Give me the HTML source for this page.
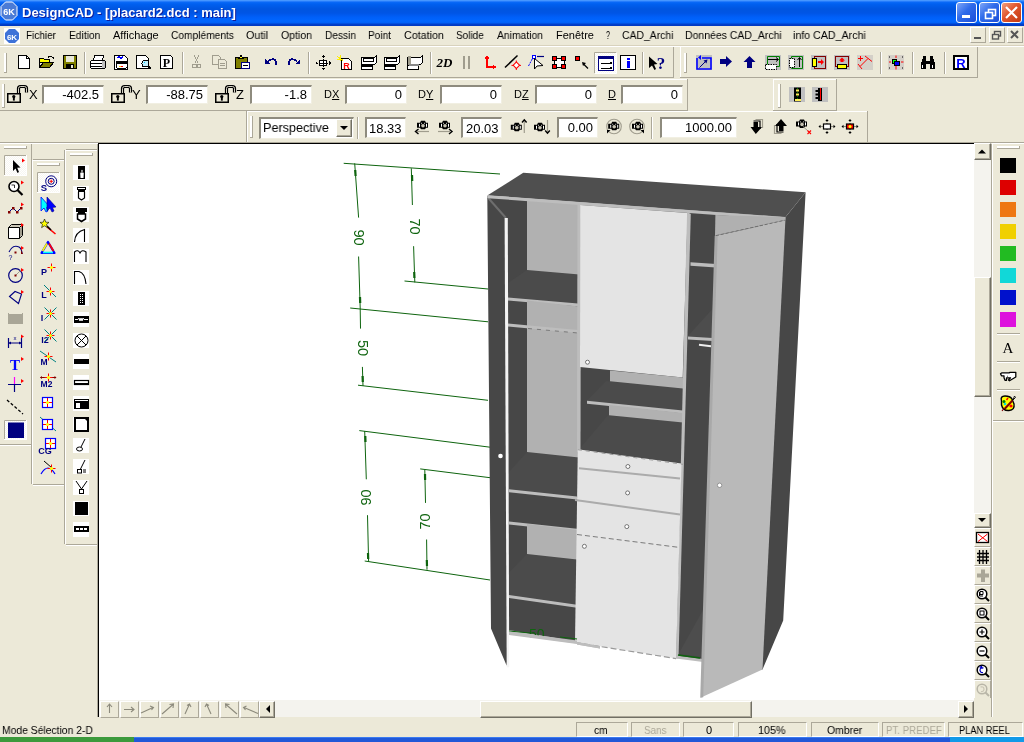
<!DOCTYPE html>
<html><head><meta charset="utf-8">
<style>
*{margin:0;padding:0;box-sizing:border-box}
html,body{-webkit-font-smoothing:antialiased;width:1024px;height:742px;overflow:hidden;background:#ECE9D8;font-family:"Liberation Sans",sans-serif;font-size:11px;color:#000}
.a{position:absolute}
#title{left:0;top:0;width:1024px;height:26px;background:linear-gradient(#4FA0FF 0,#3D8CFF 1px,#0A6AF8 2px,#0060F0 4px,#0055E0 9px,#0055E5 13px,#005FF8 17px,#0066FF 21px,#0060F5 23px,#0040CC 24px,#0038C0 26px)}
svg{position:absolute;left:0;top:0;will-change:transform}
u{text-decoration:underline}
</style></head><body>
<div class="a" id="title"></div>
<div class="a" style="left:22px;top:6px;font-size:13px;line-height:1;white-space:pre;will-change:transform;color:#fff;font-weight:bold;text-shadow:1px 1px 0 #0F1D9A">DesignCAD - [placard2.dcd : main]</div>
<div class="a" style="left:956px;top:2px;width:21px;height:21px;border:1px solid #fff;border-radius:3px;background:linear-gradient(135deg,#7FA6F8,#2F6BEA 45%,#1B4ED8)"></div>
<div class="a" style="left:979px;top:2px;width:21px;height:21px;border:1px solid #fff;border-radius:3px;background:linear-gradient(135deg,#7FA6F8,#2F6BEA 45%,#1B4ED8)"></div>
<div class="a" style="left:1001px;top:2px;width:21px;height:21px;border:1px solid #fff;border-radius:3px;background:linear-gradient(135deg,#F0A080,#E0552C 45%,#C23A12)"></div>
<div class="a" style="left:962px;top:15px;width:8px;height:3px;background:#fff"></div>
<div class="a" style="left:26px;top:30px;font-size:11px;line-height:1;white-space:pre;will-change:transform;transform:scaleX(0.909);transform-origin:0 0;">Fichier</div>
<div class="a" style="left:68.5px;top:30px;font-size:11px;line-height:1;white-space:pre;will-change:transform;transform:scaleX(0.929);transform-origin:0 0;">Edition</div>
<div class="a" style="left:112.5px;top:30px;font-size:11px;line-height:1;white-space:pre;will-change:transform;transform:scaleX(0.996);transform-origin:0 0;">Affichage</div>
<div class="a" style="left:171px;top:30px;font-size:11px;line-height:1;white-space:pre;will-change:transform;transform:scaleX(0.928);transform-origin:0 0;">Compléments</div>
<div class="a" style="left:246px;top:30px;font-size:11px;line-height:1;white-space:pre;will-change:transform;transform:scaleX(0.972);transform-origin:0 0;">Outil</div>
<div class="a" style="left:281px;top:30px;font-size:11px;line-height:1;white-space:pre;will-change:transform;transform:scaleX(0.956);transform-origin:0 0;">Option</div>
<div class="a" style="left:324.5px;top:30px;font-size:11px;line-height:1;white-space:pre;will-change:transform;transform:scaleX(0.922);transform-origin:0 0;">Dessin</div>
<div class="a" style="left:367.5px;top:30px;font-size:11px;line-height:1;white-space:pre;will-change:transform;transform:scaleX(0.917);transform-origin:0 0;">Point</div>
<div class="a" style="left:403.75px;top:30px;font-size:11px;line-height:1;white-space:pre;will-change:transform;transform:scaleX(0.976);transform-origin:0 0;">Cotation</div>
<div class="a" style="left:456px;top:30px;font-size:11px;line-height:1;white-space:pre;will-change:transform;transform:scaleX(0.908);transform-origin:0 0;">Solide</div>
<div class="a" style="left:497px;top:30px;font-size:11px;line-height:1;white-space:pre;will-change:transform;transform:scaleX(0.94);transform-origin:0 0;">Animation</div>
<div class="a" style="left:555.5px;top:30px;font-size:11px;line-height:1;white-space:pre;will-change:transform;transform:scaleX(0.989);transform-origin:0 0;">Fenêtre</div>
<div class="a" style="left:606px;top:30px;font-size:11px;line-height:1;white-space:pre;will-change:transform;transform:scaleX(0.653);transform-origin:0 0;">?</div>
<div class="a" style="left:622px;top:30px;font-size:11px;line-height:1;white-space:pre;will-change:transform;transform:scaleX(0.947);transform-origin:0 0;">CAD_Archi</div>
<div class="a" style="left:684.75px;top:30px;font-size:11px;line-height:1;white-space:pre;will-change:transform;transform:scaleX(0.953);transform-origin:0 0;">Données CAD_Archi</div>
<div class="a" style="left:793px;top:30px;font-size:11px;line-height:1;white-space:pre;will-change:transform;transform:scaleX(0.967);transform-origin:0 0;">info CAD_Archi</div>
<div class="a" style="left:970px;top:27px;width:16px;height:16px;border:1px solid;border-color:#fff #ACA899 #ACA899 #fff;background:#ECE9D8"></div>
<div class="a" style="left:989px;top:27px;width:16px;height:16px;border:1px solid;border-color:#fff #ACA899 #ACA899 #fff;background:#ECE9D8"></div>
<div class="a" style="left:1007px;top:27px;width:16px;height:16px;border:1px solid;border-color:#fff #ACA899 #ACA899 #fff;background:#ECE9D8"></div>
<div class="a" style="left:974px;top:37px;width:7px;height:2px;background:#555"></div>
<div class="a" style="left:0px;top:45px;width:1024px;height:1px;background:#D8D2BD"></div>
<div class="a" style="left:0px;top:46px;width:1024px;height:1px;background:#fff"></div>
<div class="a" style="left:0px;top:77px;width:674px;height:1px;background:#ACA899"></div>
<div class="a" style="left:680px;top:77px;width:298px;height:1px;background:#ACA899"></div>
<div class="a" style="left:673px;top:47px;width:1px;height:31px;background:#ACA899"></div>
<div class="a" style="left:680px;top:47px;width:1px;height:30px;background:#fff"></div>
<div class="a" style="left:977px;top:47px;width:1px;height:31px;background:#ACA899"></div>
<div class="a" style="left:4px;top:53px;width:1px;height:20px;background:#fff"></div>
<div class="a" style="left:5px;top:53px;width:1px;height:20px;background:#fff"></div>
<div class="a" style="left:6px;top:53px;width:1px;height:20px;background:#ACA899"></div>
<div class="a" style="left:4px;top:72px;width:3px;height:1px;background:#ACA899"></div>
<div class="a" style="left:684px;top:53px;width:1px;height:20px;background:#fff"></div>
<div class="a" style="left:685px;top:53px;width:1px;height:20px;background:#fff"></div>
<div class="a" style="left:686px;top:53px;width:1px;height:20px;background:#ACA899"></div>
<div class="a" style="left:684px;top:72px;width:3px;height:1px;background:#ACA899"></div>
<div class="a" style="left:84px;top:52px;width:1px;height:22px;background:#ACA899"></div>
<div class="a" style="left:85px;top:52px;width:1px;height:22px;background:#fff"></div>
<div class="a" style="left:182px;top:52px;width:1px;height:22px;background:#ACA899"></div>
<div class="a" style="left:183px;top:52px;width:1px;height:22px;background:#fff"></div>
<div class="a" style="left:308px;top:52px;width:1px;height:22px;background:#ACA899"></div>
<div class="a" style="left:309px;top:52px;width:1px;height:22px;background:#fff"></div>
<div class="a" style="left:430px;top:52px;width:1px;height:22px;background:#ACA899"></div>
<div class="a" style="left:431px;top:52px;width:1px;height:22px;background:#fff"></div>
<div class="a" style="left:642px;top:52px;width:1px;height:22px;background:#ACA899"></div>
<div class="a" style="left:643px;top:52px;width:1px;height:22px;background:#fff"></div>
<div class="a" style="left:880px;top:52px;width:1px;height:22px;background:#ACA899"></div>
<div class="a" style="left:881px;top:52px;width:1px;height:22px;background:#fff"></div>
<div class="a" style="left:912px;top:52px;width:1px;height:22px;background:#ACA899"></div>
<div class="a" style="left:913px;top:52px;width:1px;height:22px;background:#fff"></div>
<div class="a" style="left:944px;top:52px;width:1px;height:22px;background:#ACA899"></div>
<div class="a" style="left:945px;top:52px;width:1px;height:22px;background:#fff"></div>
<div class="a" style="left:0px;top:79px;width:688px;height:1px;background:#fff"></div>
<div class="a" style="left:773px;top:79px;width:64px;height:1px;background:#fff"></div>
<div class="a" style="left:0px;top:110px;width:688px;height:1px;background:#ACA899"></div>
<div class="a" style="left:773px;top:110px;width:64px;height:1px;background:#ACA899"></div>
<div class="a" style="left:687px;top:79px;width:1px;height:32px;background:#ACA899"></div>
<div class="a" style="left:773px;top:79px;width:1px;height:31px;background:#fff"></div>
<div class="a" style="left:836px;top:79px;width:1px;height:32px;background:#ACA899"></div>
<div class="a" style="left:2px;top:84px;width:1px;height:24px;background:#fff"></div>
<div class="a" style="left:3px;top:84px;width:1px;height:24px;background:#fff"></div>
<div class="a" style="left:4px;top:84px;width:1px;height:24px;background:#ACA899"></div>
<div class="a" style="left:2px;top:107px;width:3px;height:1px;background:#ACA899"></div>
<div class="a" style="left:778px;top:84px;width:1px;height:24px;background:#fff"></div>
<div class="a" style="left:779px;top:84px;width:1px;height:24px;background:#fff"></div>
<div class="a" style="left:780px;top:84px;width:1px;height:24px;background:#ACA899"></div>
<div class="a" style="left:778px;top:107px;width:3px;height:1px;background:#ACA899"></div>
<div class="a" style="left:42px;top:85px;width:62px;height:19px;background:#fff;border-top:2px solid #8E8B7E;border-left:2px solid #8E8B7E;border-right:1px solid #F1EFE2;border-bottom:1px solid #F1EFE2"></div>
<div class="a" style="left:42px;top:85px;width:57px;height:19px;font-size:13px;line-height:20px;text-align:right;white-space:pre;will-change:transform">-402.5</div>
<div class="a" style="left:146px;top:85px;width:62px;height:19px;background:#fff;border-top:2px solid #8E8B7E;border-left:2px solid #8E8B7E;border-right:1px solid #F1EFE2;border-bottom:1px solid #F1EFE2"></div>
<div class="a" style="left:146px;top:85px;width:57px;height:19px;font-size:13px;line-height:20px;text-align:right;white-space:pre;will-change:transform">-88.75</div>
<div class="a" style="left:250px;top:85px;width:62px;height:19px;background:#fff;border-top:2px solid #8E8B7E;border-left:2px solid #8E8B7E;border-right:1px solid #F1EFE2;border-bottom:1px solid #F1EFE2"></div>
<div class="a" style="left:250px;top:85px;width:57px;height:19px;font-size:13px;line-height:20px;text-align:right;white-space:pre;will-change:transform">-1.8</div>
<div class="a" style="left:345px;top:85px;width:62px;height:19px;background:#fff;border-top:2px solid #8E8B7E;border-left:2px solid #8E8B7E;border-right:1px solid #F1EFE2;border-bottom:1px solid #F1EFE2"></div>
<div class="a" style="left:345px;top:85px;width:57px;height:19px;font-size:13px;line-height:20px;text-align:right;white-space:pre;will-change:transform">0</div>
<div class="a" style="left:440px;top:85px;width:62px;height:19px;background:#fff;border-top:2px solid #8E8B7E;border-left:2px solid #8E8B7E;border-right:1px solid #F1EFE2;border-bottom:1px solid #F1EFE2"></div>
<div class="a" style="left:440px;top:85px;width:57px;height:19px;font-size:13px;line-height:20px;text-align:right;white-space:pre;will-change:transform">0</div>
<div class="a" style="left:535px;top:85px;width:62px;height:19px;background:#fff;border-top:2px solid #8E8B7E;border-left:2px solid #8E8B7E;border-right:1px solid #F1EFE2;border-bottom:1px solid #F1EFE2"></div>
<div class="a" style="left:535px;top:85px;width:57px;height:19px;font-size:13px;line-height:20px;text-align:right;white-space:pre;will-change:transform">0</div>
<div class="a" style="left:621px;top:85px;width:62px;height:19px;background:#fff;border-top:2px solid #8E8B7E;border-left:2px solid #8E8B7E;border-right:1px solid #F1EFE2;border-bottom:1px solid #F1EFE2"></div>
<div class="a" style="left:621px;top:85px;width:57px;height:19px;font-size:13px;line-height:20px;text-align:right;white-space:pre;will-change:transform">0</div>
<div class="a" style="left:29px;top:88px;font-size:13px;line-height:1;white-space:pre;will-change:transform;transform:scaleX(0.95);transform-origin:0 0;">X</div>
<div class="a" style="left:132px;top:88px;font-size:13px;line-height:1;white-space:pre;will-change:transform;transform:scaleX(0.95);transform-origin:0 0;">Y</div>
<div class="a" style="left:236px;top:88px;font-size:13px;line-height:1;white-space:pre;will-change:transform;transform:scaleX(0.95);transform-origin:0 0;">Z</div>
<div class="a" style="left:324px;top:89px;font-size:11px;line-height:1;white-space:pre;will-change:transform;">D<u>X</u></div>
<div class="a" style="left:418px;top:89px;font-size:11px;line-height:1;white-space:pre;will-change:transform;">D<u>Y</u></div>
<div class="a" style="left:514px;top:89px;font-size:11px;line-height:1;white-space:pre;will-change:transform;">D<u>Z</u></div>
<div class="a" style="left:607.5px;top:89px;font-size:11px;line-height:1;white-space:pre;will-change:transform;"><u>D</u></div>
<div class="a" style="left:247px;top:111px;width:620px;height:1px;background:#fff"></div>
<div class="a" style="left:246px;top:111px;width:1px;height:32px;background:#ACA899"></div>
<div class="a" style="left:247px;top:111px;width:1px;height:32px;background:#fff"></div>
<div class="a" style="left:867px;top:111px;width:1px;height:32px;background:#ACA899"></div>
<div class="a" style="left:250px;top:116px;width:1px;height:22px;background:#fff"></div>
<div class="a" style="left:251px;top:116px;width:1px;height:22px;background:#fff"></div>
<div class="a" style="left:252px;top:116px;width:1px;height:22px;background:#ACA899"></div>
<div class="a" style="left:250px;top:137px;width:3px;height:1px;background:#ACA899"></div>
<div class="a" style="left:259px;top:117px;width:95px;height:22px;background:#fff;border-top:2px solid #8E8B7E;border-left:2px solid #8E8B7E;border-right:1px solid #F1EFE2;border-bottom:1px solid #F1EFE2"></div>
<div class="a" style="left:263px;top:121px;font-size:13px;line-height:1;white-space:pre;will-change:transform;transform:scaleX(0.97);transform-origin:0 0;">Perspective</div>
<div class="a" style="left:336px;top:119px;width:16px;height:18px;background:#ECE9D8;border:1px solid;border-color:#fff #716F64 #716F64 #fff;box-shadow:inset -1px -1px 0 #ACA899"></div>
<div class="a" style="left:357px;top:117px;width:1px;height:22px;background:#ACA899"></div>
<div class="a" style="left:358px;top:117px;width:1px;height:22px;background:#fff"></div>
<div class="a" style="left:365px;top:117px;width:41px;height:21px;background:#fff;border-top:2px solid #8E8B7E;border-left:2px solid #8E8B7E;border-right:1px solid #F1EFE2;border-bottom:1px solid #F1EFE2"></div>
<div class="a" style="left:365px;top:117px;width:36px;height:21px;font-size:13px;line-height:22px;text-align:right;white-space:pre;will-change:transform"></div>
<div class="a" style="left:461px;top:117px;width:41px;height:21px;background:#fff;border-top:2px solid #8E8B7E;border-left:2px solid #8E8B7E;border-right:1px solid #F1EFE2;border-bottom:1px solid #F1EFE2"></div>
<div class="a" style="left:461px;top:117px;width:36px;height:21px;font-size:13px;line-height:22px;text-align:right;white-space:pre;will-change:transform"></div>
<div class="a" style="left:369px;top:119px;width:35px;height:18px;overflow:hidden;font-size:13px;line-height:19px;white-space:pre;will-change:transform">18.33</div>
<div class="a" style="left:466px;top:119px;width:34px;height:18px;overflow:hidden;font-size:13px;line-height:19px;white-space:pre;will-change:transform">20.03</div>
<div class="a" style="left:557px;top:117px;width:41px;height:21px;background:#fff;border-top:2px solid #8E8B7E;border-left:2px solid #8E8B7E;border-right:1px solid #F1EFE2;border-bottom:1px solid #F1EFE2"></div>
<div class="a" style="left:557px;top:117px;width:36px;height:21px;font-size:13px;line-height:22px;text-align:right;white-space:pre;will-change:transform">0.00</div>
<div class="a" style="left:660px;top:117px;width:77px;height:21px;background:#fff;border-top:2px solid #8E8B7E;border-left:2px solid #8E8B7E;border-right:1px solid #F1EFE2;border-bottom:1px solid #F1EFE2"></div>
<div class="a" style="left:660px;top:117px;width:72px;height:21px;font-size:13px;line-height:22px;text-align:right;white-space:pre;will-change:transform">1000.00</div>
<div class="a" style="left:651px;top:117px;width:1px;height:22px;background:#ACA899"></div>
<div class="a" style="left:652px;top:117px;width:1px;height:22px;background:#fff"></div>
<div class="a" style="left:0px;top:142px;width:98px;height:1px;background:#ACA899"></div>
<div class="a" style="left:0px;top:143px;width:98px;height:1px;background:#fff"></div>
<div class="a" style="left:98px;top:142px;width:894px;height:1px;background:#ACA899"></div>
<div class="a" style="left:31px;top:144px;width:1px;height:340px;background:#ACA899"></div>
<div class="a" style="left:32px;top:160px;width:1px;height:324px;background:#fff"></div>
<div class="a" style="left:0px;top:444px;width:31px;height:1px;background:#ACA899"></div>
<div class="a" style="left:0px;top:445px;width:31px;height:1px;background:#fff"></div>
<div class="a" style="left:33px;top:159px;width:31px;height:1px;background:#ACA899"></div>
<div class="a" style="left:33px;top:160px;width:31px;height:1px;background:#fff"></div>
<div class="a" style="left:64px;top:150px;width:1px;height:394px;background:#ACA899"></div>
<div class="a" style="left:65px;top:150px;width:1px;height:394px;background:#fff"></div>
<div class="a" style="left:33px;top:484px;width:31px;height:1px;background:#ACA899"></div>
<div class="a" style="left:33px;top:485px;width:31px;height:1px;background:#fff"></div>
<div class="a" style="left:66px;top:149px;width:31px;height:1px;background:#ACA899"></div>
<div class="a" style="left:66px;top:150px;width:31px;height:1px;background:#fff"></div>
<div class="a" style="left:66px;top:544px;width:31px;height:1px;background:#ACA899"></div>
<div class="a" style="left:66px;top:545px;width:31px;height:1px;background:#fff"></div>
<div class="a" style="left:97px;top:144px;width:1px;height:573px;background:#ACA899"></div>
<div class="a" style="left:4px;top:146px;width:23px;height:1px;background:#fff"></div>
<div class="a" style="left:4px;top:147px;width:23px;height:1px;background:#fff"></div>
<div class="a" style="left:4px;top:148px;width:23px;height:1px;background:#ACA899"></div>
<div class="a" style="left:26px;top:146px;width:1px;height:3px;background:#ACA899"></div>
<div class="a" style="left:37px;top:163px;width:23px;height:1px;background:#fff"></div>
<div class="a" style="left:37px;top:164px;width:23px;height:1px;background:#fff"></div>
<div class="a" style="left:37px;top:165px;width:23px;height:1px;background:#ACA899"></div>
<div class="a" style="left:59px;top:163px;width:1px;height:3px;background:#ACA899"></div>
<div class="a" style="left:70px;top:153px;width:23px;height:1px;background:#fff"></div>
<div class="a" style="left:70px;top:154px;width:23px;height:1px;background:#fff"></div>
<div class="a" style="left:70px;top:155px;width:23px;height:1px;background:#ACA899"></div>
<div class="a" style="left:92px;top:153px;width:1px;height:3px;background:#ACA899"></div>
<div class="a" style="left:98px;top:143px;width:876px;height:1px;background:#000"></div>
<div class="a" style="left:98px;top:143px;width:1px;height:574px;background:#000"></div>
<div class="a" style="left:99px;top:144px;width:875px;height:556px;background:#fff"></div>
<div class="a" style="left:974px;top:144px;width:17px;height:556px;background:#F4F3EE"></div>
<div class="a" style="left:974px;top:143px;width:17px;height:17px;background:#ECE9D8;border:1px solid;border-color:#fff #716F64 #716F64 #fff;box-shadow:inset -1px -1px 0 #ACA899"></div>
<div class="a" style="left:974px;top:277px;width:17px;height:120px;background:#ECE9D8;border:1px solid;border-color:#fff #716F64 #716F64 #fff;box-shadow:inset -1px -1px 0 #ACA899"></div>
<div class="a" style="left:974px;top:513px;width:17px;height:15px;background:#ECE9D8;border:1px solid;border-color:#fff #716F64 #716F64 #fff;box-shadow:inset -1px -1px 0 #ACA899"></div>
<div class="a" style="left:974px;top:528px;width:17px;height:19px;background:#ECE9D8;border:1px solid;border-color:#fff #ACA899 #ACA899 #fff"></div>
<div class="a" style="left:974px;top:547px;width:17px;height:19px;background:#ECE9D8;border:1px solid;border-color:#fff #ACA899 #ACA899 #fff"></div>
<div class="a" style="left:974px;top:566px;width:17px;height:19px;background:#ECE9D8;border:1px solid;border-color:#fff #ACA899 #ACA899 #fff"></div>
<div class="a" style="left:974px;top:585px;width:17px;height:19px;background:#ECE9D8;border:1px solid;border-color:#fff #ACA899 #ACA899 #fff"></div>
<div class="a" style="left:974px;top:604px;width:17px;height:19px;background:#ECE9D8;border:1px solid;border-color:#fff #ACA899 #ACA899 #fff"></div>
<div class="a" style="left:974px;top:623px;width:17px;height:19px;background:#ECE9D8;border:1px solid;border-color:#fff #ACA899 #ACA899 #fff"></div>
<div class="a" style="left:974px;top:642px;width:17px;height:19px;background:#ECE9D8;border:1px solid;border-color:#fff #ACA899 #ACA899 #fff"></div>
<div class="a" style="left:974px;top:661px;width:17px;height:19px;background:#ECE9D8;border:1px solid;border-color:#fff #ACA899 #ACA899 #fff"></div>
<div class="a" style="left:974px;top:680px;width:17px;height:19px;background:#ECE9D8;border:1px solid;border-color:#fff #ACA899 #ACA899 #fff"></div>
<div class="a" style="left:974px;top:698px;width:17px;height:20px;background:#ECE9D8"></div>
<div class="a" style="left:99px;top:700px;width:875px;height:17px;background:#F4F3EE"></div>
<div class="a" style="left:100px;top:701px;width:19px;height:17px;background:#ECE9D8;border:1px solid;border-color:#fff #ACA899 #ACA899 #fff"></div>
<div class="a" style="left:120px;top:701px;width:19px;height:17px;background:#ECE9D8;border:1px solid;border-color:#fff #ACA899 #ACA899 #fff"></div>
<div class="a" style="left:140px;top:701px;width:19px;height:17px;background:#ECE9D8;border:1px solid;border-color:#fff #ACA899 #ACA899 #fff"></div>
<div class="a" style="left:160px;top:701px;width:19px;height:17px;background:#ECE9D8;border:1px solid;border-color:#fff #ACA899 #ACA899 #fff"></div>
<div class="a" style="left:180px;top:701px;width:19px;height:17px;background:#ECE9D8;border:1px solid;border-color:#fff #ACA899 #ACA899 #fff"></div>
<div class="a" style="left:200px;top:701px;width:19px;height:17px;background:#ECE9D8;border:1px solid;border-color:#fff #ACA899 #ACA899 #fff"></div>
<div class="a" style="left:220px;top:701px;width:19px;height:17px;background:#ECE9D8;border:1px solid;border-color:#fff #ACA899 #ACA899 #fff"></div>
<div class="a" style="left:240px;top:701px;width:19px;height:17px;background:#ECE9D8;border:1px solid;border-color:#fff #ACA899 #ACA899 #fff"></div>
<div class="a" style="left:259px;top:701px;width:16px;height:17px;background:#ECE9D8;border:1px solid;border-color:#fff #716F64 #716F64 #fff;box-shadow:inset -1px -1px 0 #ACA899"></div>
<div class="a" style="left:480px;top:701px;width:272px;height:17px;background:#ECE9D8;border:1px solid;border-color:#fff #716F64 #716F64 #fff;box-shadow:inset -1px -1px 0 #ACA899"></div>
<div class="a" style="left:958px;top:701px;width:16px;height:17px;background:#ECE9D8;border:1px solid;border-color:#fff #716F64 #716F64 #fff;box-shadow:inset -1px -1px 0 #ACA899"></div>
<div class="a" style="left:992px;top:142px;width:32px;height:1px;background:#ACA899"></div>
<div class="a" style="left:992px;top:143px;width:32px;height:1px;background:#fff"></div>
<div class="a" style="left:991px;top:144px;width:1px;height:573px;background:#ACA899"></div>
<div class="a" style="left:992px;top:144px;width:1px;height:573px;background:#fff"></div>
<div class="a" style="left:997px;top:146px;width:23px;height:1px;background:#fff"></div>
<div class="a" style="left:997px;top:147px;width:23px;height:1px;background:#fff"></div>
<div class="a" style="left:997px;top:148px;width:23px;height:1px;background:#ACA899"></div>
<div class="a" style="left:1019px;top:146px;width:1px;height:3px;background:#ACA899"></div>
<div class="a" style="left:1000px;top:158px;width:16px;height:15px;background:#000000"></div>
<div class="a" style="left:1000px;top:180px;width:16px;height:15px;background:#DD0000"></div>
<div class="a" style="left:1000px;top:202px;width:16px;height:15px;background:#EE7711"></div>
<div class="a" style="left:1000px;top:224px;width:16px;height:15px;background:#F0D000"></div>
<div class="a" style="left:1000px;top:246px;width:16px;height:15px;background:#22BB22"></div>
<div class="a" style="left:1000px;top:268px;width:16px;height:15px;background:#11D8D8"></div>
<div class="a" style="left:1000px;top:290px;width:16px;height:15px;background:#0011CC"></div>
<div class="a" style="left:1000px;top:312px;width:16px;height:15px;background:#DD11DD"></div>
<div class="a" style="left:997px;top:333px;width:23px;height:1px;background:#ACA899"></div>
<div class="a" style="left:997px;top:334px;width:23px;height:1px;background:#fff"></div>
<div class="a" style="left:997px;top:361px;width:23px;height:1px;background:#ACA899"></div>
<div class="a" style="left:997px;top:362px;width:23px;height:1px;background:#fff"></div>
<div class="a" style="left:997px;top:389px;width:23px;height:1px;background:#ACA899"></div>
<div class="a" style="left:997px;top:390px;width:23px;height:1px;background:#fff"></div>
<div class="a" style="left:993px;top:420px;width:31px;height:1px;background:#ACA899"></div>
<div class="a" style="left:993px;top:421px;width:31px;height:1px;background:#fff"></div>
<div class="a" style="left:0px;top:718px;width:1024px;height:1px;background:#ECE9D8"></div>
<div class="a" style="left:2px;top:725px;font-size:11px;line-height:1;white-space:pre;will-change:transform;transform:scaleX(0.94);transform-origin:0 0;">Mode Sélection 2-D</div>
<div class="a" style="left:576px;top:722px;width:52px;height:15px;border:1px solid;border-color:#ACA899 #fff #fff #ACA899"></div>
<div class="a" style="left:594px;top:725px;font-size:11px;line-height:1;white-space:pre;will-change:transform;transform:scaleX(0.93);transform-origin:0 0;color:#000">cm</div>
<div class="a" style="left:631px;top:722px;width:49px;height:15px;border:1px solid;border-color:#ACA899 #fff #fff #ACA899"></div>
<div class="a" style="left:643.8px;top:725px;font-size:11px;line-height:1;white-space:pre;will-change:transform;transform:scaleX(0.9);transform-origin:0 0;color:#ACA899">Sans</div>
<div class="a" style="left:683px;top:722px;width:51px;height:15px;border:1px solid;border-color:#ACA899 #fff #fff #ACA899"></div>
<div class="a" style="left:706px;top:725px;font-size:11px;line-height:1;white-space:pre;will-change:transform;color:#000">0</div>
<div class="a" style="left:738px;top:722px;width:69px;height:15px;border:1px solid;border-color:#ACA899 #fff #fff #ACA899"></div>
<div class="a" style="left:758px;top:725px;font-size:11px;line-height:1;white-space:pre;will-change:transform;transform:scaleX(0.98);transform-origin:0 0;color:#000">105%</div>
<div class="a" style="left:811px;top:722px;width:68px;height:15px;border:1px solid;border-color:#ACA899 #fff #fff #ACA899"></div>
<div class="a" style="left:827.3px;top:725px;font-size:11px;line-height:1;white-space:pre;will-change:transform;transform:scaleX(0.95);transform-origin:0 0;color:#000">Ombrer</div>
<div class="a" style="left:882px;top:722px;width:63px;height:15px;border:1px solid;border-color:#ACA899 #fff #fff #ACA899"></div>
<div class="a" style="left:885.6px;top:725px;font-size:11px;line-height:1;white-space:pre;will-change:transform;transform:scaleX(0.88);transform-origin:0 0;color:#ACA899">PT. PREDEF</div>
<div class="a" style="left:948px;top:722px;width:75px;height:15px;border:1px solid;border-color:#ACA899 #fff #fff #ACA899"></div>
<div class="a" style="left:959.4px;top:725px;font-size:11px;line-height:1;white-space:pre;will-change:transform;transform:scaleX(0.84);transform-origin:0 0;color:#000">PLAN REEL</div>
<div class="a" style="left:0px;top:737px;width:1024px;height:5px;background:#2158D8;border-top:1px solid #3A7BF0"></div>
<div class="a" style="left:0px;top:737px;width:134px;height:5px;background:#3C9A3C"></div>
<div class="a" style="left:950px;top:737px;width:74px;height:5px;background:#129AE8"></div>
<svg width="1024" height="742" viewBox="0 0 1024 742">
<defs><pattern id="dith" width="2" height="2" patternUnits="userSpaceOnUse"><rect width="2" height="2" fill="#F7F6F1"/><rect width="1" height="1" fill="#fff"/><rect x="1" y="1" width="1" height="1" fill="#fff"/></pattern></defs><polygon points="5.5,2 12.5,2 17,6.5 17,15.5 12.5,20 5.5,20 1,15.5 1,6.5" fill="#4A7BD6" stroke="#fff" stroke-width="1"/>
<text x="9" y="15" font-family="Liberation Sans" font-size="9" font-weight="bold" fill="#fff" text-anchor="middle">6K</text>
<rect x="988.5" y="9.5" width="7" height="6" fill="none" stroke="#fff" stroke-width="1.6"/><rect x="985.5" y="12.5" width="7" height="6" fill="#2F6BEA" stroke="#fff" stroke-width="1.6"/>
<path d="M1006 7 L1017 18 M1017 7 L1006 18" stroke="#fff" stroke-width="2.2"/>
<rect x="4" y="28" width="16" height="16" fill="#fff"/><polygon points="9,29 15,29 19,33 19,39 15,43 9,43 5,39 5,33" fill="#3E72D8"/><text x="12" y="40" font-family="Liberation Sans" font-size="8" font-weight="bold" fill="#fff" text-anchor="middle">6K</text>
<rect x="994.5" y="31.5" width="6" height="4.5" fill="none" stroke="#555" stroke-width="1.4"/><rect x="992.5" y="34.5" width="6" height="4.5" fill="#ECE9D8" stroke="#555" stroke-width="1.4"/>
<path d="M1011 31 L1018 38 M1018 31 L1011 38" stroke="#555" stroke-width="2"/>
<polygon points="340,126 348,126 344,130" fill="#000"/>
<polygon points="978,153.5 986,153.5 982,149.5" fill="#000"/>
<polygon points="978,518 986,518 982,522" fill="#000"/>
<polygon points="270,705 270,713 266,709" fill="#000"/>
<polygon points="964,705 964,713 968,709" fill="#000"/>
<g transform="translate(18,55)" shape-rendering="crispEdges"><path d="M0.5,0.5 H8.5 L11.5,3.5 V13.5 H0.5 Z" fill="#fff" stroke="#000"/><path d="M8.5,0.5 V3.5 H11.5" fill="none" stroke="#000"/></g>
<g transform="translate(39,55)" shape-rendering="crispEdges"><path d="M0.5,3.5 H4.5 L5.5,4.5 H10.5 V7.5 H0.5 Z" fill="#FFFF00" stroke="#000"/><path d="M0.5,3.5 V12.5 H10.5 L14.5,7.5 H4.5 L0.5,12.5" fill="#808000" stroke="#000"/><path d="M9,2.5 Q11,-0.5 13.5,2.5" fill="none" stroke="#000"/><path d="M12,2 L14.5,4.5 L14.5,1.5 Z" fill="#000"/></g>
<g transform="translate(63,55)" shape-rendering="crispEdges"><rect x="0.5" y="0.5" width="13" height="13" fill="#808000" stroke="#000"/><rect x="3" y="1" width="8" height="6" fill="#E8E8D8"/><rect x="3" y="9" width="8" height="4" fill="#000"/><rect x="8" y="10" width="2" height="3" fill="#E8E8D8"/></g>
<g transform="translate(90,55)" shape-rendering="crispEdges"><path d="M4.5,0.5 H13.5 L12.5,5.5 H3.5 Z" fill="#fff" stroke="#000"/><rect x="0.5" y="5.5" width="15" height="8" rx="2" fill="#fff" stroke="#000"/><path d="M1,8.5 H15 M1,11.5 H15" stroke="#000"/><rect x="12" y="6" width="3" height="7" fill="#C0C0C0"/></g>
<g transform="translate(114,55)" shape-rendering="crispEdges"><path d="M0.5,0.5 H10.5 L13.5,3.5 V14.5 H0.5 Z" fill="#fff" stroke="#000"/><path d="M3,3 Q5,1 7,3 L9,2" fill="none" stroke="#0000FF" stroke-width="1.5"/><rect x="2" y="6" width="11" height="7" rx="1" fill="#fff" stroke="#000"/><rect x="2" y="7" width="11" height="2" fill="#000"/><rect x="5" y="11" width="2" height="1" fill="#FFD000"/><rect x="7" y="11" width="2" height="1" fill="#F00"/></g>
<g transform="translate(136,55)" shape-rendering="crispEdges"><path d="M0.5,0.5 H9.5 L12.5,3.5 V13.5 H0.5 Z" fill="#fff" stroke="#000"/><circle cx="9.5" cy="8.5" r="3.5" fill="#BFEFFF" stroke="#000"/><circle cx="8.5" cy="7.5" r="1" fill="#00C8F0"/><path d="M12,11 L15,14" stroke="#000" stroke-width="2"/></g>
<g transform="translate(160,55)" shape-rendering="crispEdges"><path d="M0.5,0.5 H10.5 L12.5,2.5 V13.5 H0.5 Z" fill="#fff" stroke="#000"/><text x="6.5" y="12" font-family="Liberation Serif" font-weight="bold" font-size="12" text-anchor="middle" fill="#000">P</text></g>
<g transform="translate(192,55)" shape-rendering="crispEdges"><path d="M2,0 L6,8 M7,0 L3,8" stroke="#A09D8E" fill="none"/><circle cx="2.5" cy="11" r="2" fill="none" stroke="#A09D8E"/><circle cx="7" cy="11" r="2" fill="none" stroke="#A09D8E"/></g>
<g transform="translate(212,55)" shape-rendering="crispEdges"><path d="M0.5,0.5 H6.5 L8.5,2.5 V9.5 H0.5 Z" fill="none" stroke="#A09D8E"/><path d="M6.5,4.5 H12.5 L14.5,6.5 V13.5 H6.5 Z" fill="#ECE9D8" stroke="#A09D8E"/><path d="M8,8.5 H13 M8,10.5 H13" stroke="#A09D8E"/></g>
<g transform="translate(235,55)" shape-rendering="crispEdges"><rect x="0.5" y="2.5" width="12" height="11" rx="1" fill="#808000" stroke="#000"/><path d="M3.5,3.5 L6,0.5 L8.5,3.5 Z" fill="#FFFF00" stroke="#000"/><rect x="6.5" y="7.5" width="8" height="6" fill="#fff" stroke="#000080"/><path d="M8,10.5 H13" stroke="#000"/></g>
<g transform="translate(265,58)" shape-rendering="crispEdges"><path d="M3,3.5 Q6,0.5 9.5,1.5 Q12,3 10.5,7.5" fill="none" stroke="#000080" stroke-width="1.6"/><path d="M0,1 L0,6 L5,6 Z" fill="#000080"/></g>
<g transform="translate(288,58)" shape-rendering="crispEdges"><path d="M9,3.5 Q6,0.5 2.5,1.5 Q0,3 1.5,7.5" fill="none" stroke="#000080" stroke-width="1.6"/><path d="M12,1 L12,6 L7,6 Z" fill="#000080"/></g>
<g transform="translate(315,55)" shape-rendering="crispEdges"><rect x="4.5" y="5.5" width="7" height="5" fill="#fff" stroke="#000" stroke-width="1.2"/><path d="M5,8 H11 M8,6 V10" stroke="#000"/><path d="M8,0 L6,2 H10 Z M8,15 L6,13 H10 Z M0,8 L2,6 V10 Z M16,8 L14,6 V10 Z" fill="#000"/><path d="M8,2 V5 M8,11 V13 M2,8 H4 M12,8 H14" stroke="#000" stroke-dasharray="1,1"/></g>
<g transform="translate(337,55)" shape-rendering="crispEdges"><path d="M4.5,3.5 H11.5 L14.5,6.5 V14.5 H4.5 Z" fill="#fff" stroke="#000"/><text x="9.5" y="13.5" font-family="Liberation Sans" font-weight="bold" font-size="9" fill="#F00" text-anchor="middle">R</text><path d="M0,1 L6,6 M3,0 L4,6 M0,5 L6,4" stroke="#FFEE00" stroke-width="1"/></g>
<g transform="translate(361,55)" shape-rendering="crispEdges"><path d="M0.5,2.5 H13.5 L15.5,0.5 V7.5 L13.5,9.5 H0.5 Z" fill="#fff" stroke="#000" stroke-width="1.2"/><rect x="2.5" y="3.5" width="10" height="3" fill="none" stroke="#000"/><path d="M0.5,10.5 H11.5 V14.5 H0.5 Z" fill="#fff" stroke="#000" stroke-width="1.2"/><path d="M1,11.5 H11" stroke="#000"/></g>
<g transform="translate(384,55)" shape-rendering="crispEdges"><path d="M0.5,2.5 H13.5 L15.5,0.5 V7.5 L13.5,9.5 H0.5 Z" fill="#fff" stroke="#000" stroke-width="1.2"/><rect x="2.5" y="3.5" width="10" height="3" fill="none" stroke="#000"/><path d="M0.5,10.5 H11.5 V14.5 H0.5 Z" fill="#fff" stroke="#000" stroke-width="1.2"/><path d="M1,11.5 H11" stroke="#000"/></g>
<g transform="translate(407,55)" shape-rendering="crispEdges"><path d="M0.5,2.5 H13.5 L15.5,0.5 V7.5 L13.5,9.5 H0.5 Z" fill="#fff" stroke="#000" stroke-width="1.2"/><rect x="0.5" y="0.5" width="3" height="9" fill="#A09D8E"/><path d="M0.5,10.5 H11.5 V14.5 H0.5 Z" fill="#fff" stroke="#000" stroke-width="1.2"/><rect x="2" y="9" width="10" height="2" fill="#888"/></g>
<text x="444.5" y="67" font-family="Liberation Serif" font-weight="bold" font-style="italic" font-size="13" text-anchor="middle" fill="#000">2D</text>
<rect x="463" y="56" width="2" height="13" fill="#A09D8E"/><rect x="468" y="56" width="2" height="13" fill="#A09D8E"/>
<g transform="translate(484,55)" shape-rendering="crispEdges"><path d="M3,2 V12 H12" fill="none" stroke="#F00" stroke-width="1.5"/><path d="M3,0 L0.5,4 H5.5 Z M12.5,12 L9,9.5 V14.5 Z" fill="#F00"/></g>
<path d="M505,67.5 L517.5,55.5" stroke="#000" stroke-width="1.5"/><path d="M516.3,60.5 V70 M511.5,65.4 H521" stroke="#F00"/><rect x="514" y="63" width="4.5" height="4.5" fill="#fff" stroke="#F00" transform="rotate(45 516.3 65.4)"/>
<rect x="532.5" y="55.5" width="3" height="3" fill="#fff" stroke="#00F"/><path d="M537,56.5 H544" stroke="#000080" stroke-width="1.2"/><path d="M528.5,66 L532.5,58.5" stroke="#00F" stroke-dasharray="2,1"/><path d="M534.5,58.5 V69 L537,66 L543,65.5 Z" fill="#fff" stroke="#000"/>
<g transform="translate(552,56)" shape-rendering="crispEdges"><rect x="2" y="2" width="10" height="9" fill="#fff" stroke="#000"/><rect x="0.5" y="0.5" width="4" height="4" fill="#F00" stroke="#000"/><rect x="9.5" y="0.5" width="4" height="4" fill="#F00" stroke="#000"/><rect x="0.5" y="8.5" width="4" height="4" fill="#F00" stroke="#000"/><rect x="9.5" y="8.5" width="4" height="4" fill="#F00" stroke="#000"/></g>
<rect x="575.5" y="56.5" width="4" height="4" fill="#F00" stroke="#000"/><path d="M583,63.5 L588,68.5" stroke="#000" stroke-width="1.2"/><path d="M582,62 L586,63 L583,66 Z" fill="#000"/>
<rect x="594.5" y="52.5" width="22" height="21" fill="url(#dith)" stroke="none"/><path d="M594.5,73.5 V52.5 H616.5" fill="none" stroke="#ACA899"/><path d="M616.5,52.5 V73.5 H594.5" fill="none" stroke="#fff"/>
<g transform="translate(598,56)" shape-rendering="crispEdges"><rect x="0.5" y="0.5" width="15" height="14" fill="#fff" stroke="#000080"/><rect x="0" y="0" width="16" height="3" fill="#000080"/><path d="M3,7.5 H13 V6 M3,12.5 H13 V11" fill="none" stroke="#000" stroke-width="1.2"/></g>
<g transform="translate(620,55)" shape-rendering="crispEdges"><rect x="0.5" y="0.5" width="15" height="14" fill="#fff" stroke="#000" stroke-width="1.4"/><rect x="6.5" y="6" width="3" height="7" fill="#00F"/><rect x="6.5" y="3" width="3" height="2" fill="#00F"/></g>
<path d="M649,56.5 L649,68 L652,65.5 L654.5,70 L656,69 L654,64.5 L657.5,64 Z" fill="#000"/><text x="661" y="68.5" font-family="Liberation Serif" font-weight="bold" font-size="17" text-anchor="middle" fill="#000080">?</text>
<rect x="696" y="55" width="16" height="15" fill="#C0C0C0"/><path d="M697,58 V69 H711 V58 H702" fill="none" stroke="#00F" stroke-width="1.6"/><path d="M698,57.5 L701,55 V60 Z" fill="#00F"/><path d="M699.5,67.5 L706,61" stroke="#000080"/><path d="M707.5,59.5 L703.5,60.5 L706.5,63.5 Z" fill="#000080"/>
<path d="M720,59 H726 V56 L732,61.5 L726,67 V64 H720 Z" fill="#000080"/>
<path d="M749.5,56 L755.5,62 H752 V68 H747 V62 H743.5 Z" fill="#000080"/>
<rect x="765" y="55" width="16" height="15" fill="#C0C0C0"/><path d="M767.5,56.5 H779.5 V66.5 H767.5 Z" fill="none" stroke="#008000"/><path d="M768,59.5 H778" stroke="#000"/><path d="M776,57.5 L778.5,59.5 L776,61.5" fill="none" stroke="#000"/><rect x="765.5" y="64.5" width="11" height="5" fill="#fff" stroke="#000" stroke-dasharray="1.5,1"/>
<rect x="788" y="55" width="16" height="15" fill="#C0C0C0"/><path d="M791.5,56.5 H802.5 V68.5 H791.5 Z" fill="none" stroke="#008000"/><rect x="789.5" y="58.5" width="5" height="9" fill="#fff" stroke="#000" stroke-dasharray="1.5,1"/><path d="M799.5,58 V67" stroke="#000"/><path d="M797.5,60 L799.5,57.5 L801.5,60" fill="none" stroke="#000"/>
<rect x="811" y="55" width="16" height="15" fill="#C0C0C0"/><rect x="814.5" y="56.5" width="11" height="12" fill="none" stroke="#800000"/><rect x="812.5" y="58.5" width="4" height="8" fill="#FFFF00" stroke="#000"/><path d="M818,61 H821 V59 L824,62 L821,65 V63 H818 Z" fill="#F00"/>
<rect x="834" y="55" width="16" height="15" fill="#C0C0C0"/><rect x="835.5" y="56.5" width="13" height="10" fill="none" stroke="#800000"/><path d="M842,57.5 L845,60.5 H843.5 V62 H840.5 V60.5 H839 Z" fill="#F00"/><rect x="837.5" y="64.5" width="9" height="4" fill="#FFFF00" stroke="#000"/>
<rect x="857" y="55" width="16" height="15" fill="#D4D0C8"/><path d="M858,58.5 H863 M860.5,56 V61 M858,64 L862,69 M865,56 L872,61.5 M860,66.5 L868,58.5" stroke="#F00"/>
<rect x="888" y="55" width="16" height="15" fill="#D4D0C8"/><rect x="892.5" y="59.5" width="4" height="4" fill="#0F0" stroke="#000"/><rect x="894.5" y="61.5" width="5" height="4" fill="#00F" stroke="#000"/><path d="M896,55.5 V58 M896,66 V69.5 M889,62 H891 M901,62 H903.5" stroke="#F00"/><path d="M889,57 h1 M902,57 h1 M889,68 h1 M902,68 h1" stroke="#000"/>
<g transform="translate(920,56)" shape-rendering="crispEdges"><path d="M1,13 V7 L3,2 H6 V13 Z M15,13 V7 L13,2 H10 V13 Z" fill="#000"/><rect x="5" y="5" width="6" height="3" fill="#000"/><rect x="2" y="9" width="1" height="3" fill="#fff"/><rect x="12" y="9" width="1" height="3" fill="#fff"/><rect x="3" y="0" width="3" height="3" fill="#000"/><rect x="10" y="0" width="3" height="3" fill="#000"/></g>
<g transform="translate(953,55)" shape-rendering="crispEdges"><rect x="1" y="1" width="14" height="13" fill="#fff" stroke="#000" stroke-width="2"/><text x="8" y="12.5" font-family="Liberation Sans" font-weight="bold" font-size="13" fill="#0000FF" text-anchor="middle">R</text></g>
<line x1="343.7" y1="163.3" x2="500" y2="174" stroke="#0E640E" stroke-width="1" />
<line x1="354.7" y1="163.3" x2="358.6" y2="217.6" stroke="#0E640E" stroke-width="1" />
<line x1="358.6" y1="256.5" x2="360.2" y2="308" stroke="#0E640E" stroke-width="1" />
<line x1="360.2" y1="308" x2="360.5" y2="328.6" stroke="#0E640E" stroke-width="1" />
<line x1="362.4" y1="366.9" x2="363" y2="386" stroke="#0E640E" stroke-width="1" />
<line x1="411.3" y1="168.3" x2="412.4" y2="205" stroke="#0E640E" stroke-width="1" />
<line x1="413.6" y1="246.2" x2="414.8" y2="282.4" stroke="#0E640E" stroke-width="1" />
<line x1="404.5" y1="281" x2="488" y2="289" stroke="#0E640E" stroke-width="1" />
<line x1="350.2" y1="308" x2="488" y2="321.8" stroke="#0E640E" stroke-width="1" />
<line x1="358" y1="385.2" x2="488" y2="400.3" stroke="#0E640E" stroke-width="1" />
<line x1="359.3" y1="430.6" x2="490" y2="447.2" stroke="#0E640E" stroke-width="1" />
<line x1="364.7" y1="431" x2="366.3" y2="479.3" stroke="#0E640E" stroke-width="1" />
<line x1="367.5" y1="515.2" x2="368.6" y2="561.7" stroke="#0E640E" stroke-width="1" />
<line x1="420.2" y1="468.9" x2="490" y2="477.7" stroke="#0E640E" stroke-width="1" />
<line x1="424.8" y1="470" x2="425.5" y2="502.9" stroke="#0E640E" stroke-width="1" />
<line x1="426.6" y1="539.5" x2="427" y2="569.7" stroke="#0E640E" stroke-width="1" />
<line x1="364.7" y1="561" x2="490" y2="580" stroke="#0E640E" stroke-width="1" />
<line x1="355.2" y1="170" x2="355.6" y2="176" stroke="#0E640E" stroke-width="2.2" />
<line x1="412" y1="175" x2="412.2" y2="181" stroke="#0E640E" stroke-width="2.2" />
<line x1="414.2" y1="272" x2="414.4" y2="278" stroke="#0E640E" stroke-width="2.2" />
<line x1="360" y1="297" x2="360.2" y2="303" stroke="#0E640E" stroke-width="2.2" />
<line x1="362.6" y1="376" x2="362.8" y2="382" stroke="#0E640E" stroke-width="2.2" />
<line x1="365.3" y1="436" x2="365.5" y2="442" stroke="#0E640E" stroke-width="2.2" />
<line x1="368" y1="553" x2="368.2" y2="559" stroke="#0E640E" stroke-width="2.2" />
<line x1="425" y1="474" x2="425.1" y2="480" stroke="#0E640E" stroke-width="2.2" />
<line x1="426.8" y1="560" x2="427" y2="566" stroke="#0E640E" stroke-width="2.2" />
<text x="0" y="0" transform="translate(358.5,237.5) rotate(90)" font-family="Liberation Sans" font-size="14.5" fill="#0E640E" text-anchor="middle" dominant-baseline="central" style="font-weight:normal">90</text>
<text x="0" y="0" transform="translate(415,226.5) rotate(90)" font-family="Liberation Sans" font-size="14.5" fill="#0E640E" text-anchor="middle" dominant-baseline="central" style="font-weight:normal">70</text>
<text x="0" y="0" transform="translate(362.5,348) rotate(90)" font-family="Liberation Sans" font-size="14.5" fill="#0E640E" text-anchor="middle" dominant-baseline="central" style="font-weight:normal">50</text>
<text x="0" y="0" transform="translate(366,497.5) rotate(-90)" font-family="Liberation Sans" font-size="14.5" fill="#0E640E" text-anchor="middle" dominant-baseline="central" style="font-weight:normal">90</text>
<text x="0" y="0" transform="translate(425,521.5) rotate(-90)" font-family="Liberation Sans" font-size="14.5" fill="#0E640E" text-anchor="middle" dominant-baseline="central" style="font-weight:normal">70</text>
<polygon points="740,217 785.4,217.2 805.6,192.3 783.2,620.4 762.5,669.4 740,669" fill="#474747" />
<polygon points="487.3,195.4 523.3,172.8 805.6,192.3 785.4,217.2" fill="#4F4F4F" />
<polygon points="487.3,196 785.4,217.2 762,669 703,661 509,632 506.7,665.7 491,628.5" fill="#474747" />
<polygon points="508,283 527,269.9 579.5,274.4 578,303.5 508,297.5" fill="#4B4B4B" />
<polygon points="509,472 527,452 579,457.6 577,496.4 509,489.2" fill="#4B4B4B" />
<polygon points="509,572.5 527,553.9 577,559.5 577,604.8 509,595.1" fill="#4B4B4B" />
<polygon points="587,400.7 606,381 683,388.6 683,410.4" fill="#4B4B4B" />
<polygon points="580.7,447.6 608,415.3 683,422.6 683,463.8 577.8,449.2" fill="#4B4B4B" />
<polygon points="687.9,336 713.3,308 713.3,337.8" fill="#4D4D4D" />
<polygon points="678.5,654 703,610 703,657" fill="#4D4D4D" />
<polygon points="527,200 579.5,203.8 579.5,274.4 527,269.9" fill="#B1B1B1" />
<polygon points="508,297.5 578,303.5 578,306.5 508,300.5" fill="#BDBDBD" />
<polygon points="527,300.5 579,306.5 579,457.6 527,452" fill="#B1B1B1" />
<polygon points="508,323.5 578,330 578,333 508,326.5" fill="#BDBDBD" />
<line x1="528" y1="328.5" x2="578" y2="333" stroke="#7A7A7A" stroke-width="1" stroke-dasharray="4,5"/>
<polygon points="509,489.2 577,496.4 577,499.4 509,492.2" fill="#BDBDBD" />
<polygon points="509,521.5 577,528.8 577,531.8 509,524.5" fill="#BDBDBD" />
<polygon points="527,524 577,530 577,559.5 527,553.9" fill="#B1B1B1" />
<polygon points="509,595.1 577,604.8 577,607.8 509,598.1" fill="#BDBDBD" />
<polygon points="509,630.1 600,645.5 600,648.5 509,633.1" fill="#BDBDBD" />
<polygon points="577.5,203 581,203.5 580.5,452 577,452" fill="#BDBDBD" />
<line x1="487.8" y1="197.5" x2="506" y2="218" stroke="#6E6E6E" stroke-width="2" />
<polygon points="504.6,218 507.8,218 509.2,667.3 506.7,667.3" fill="#F4F4F4" />
<circle cx="500.5" cy="456" r="2.3" fill="#fff"/>
<polygon points="487.3,195.2 785.4,217 785.4,220 487.3,198.2" fill="#BDBDBD" />
<polygon points="580.3,205 687.6,213 682.7,377.5 580,367" fill="#E4E4E4" />
<circle cx="587.5" cy="362.2" r="2" fill="#fff" stroke="#555" stroke-width="0.8"/>
<polygon points="610,370.5 683,377.5 683,388.6 610,381.3" fill="#B1B1B1" />
<polygon points="587,400.7 683,410.4 683,413.4 587,403.7" fill="#BDBDBD" />
<polygon points="609,405 683,413 683,422.6 609,415.3" fill="#B1B1B1" />
<polygon points="687.1,212 690.8,214 678.5,658.5 676,658.5" fill="#BDBDBD" />
<polygon points="577.8,449.2 681.5,463.6 676.1,658.4 575,642.3" fill="#E4E4E4" />
<line x1="577.8" y1="449.7" x2="683" y2="464.3" stroke="#9A9A9A" stroke-width="1" stroke-dasharray="4,4"/>
<line x1="579" y1="468.3" x2="680" y2="478.5" stroke="#ABABAB" stroke-width="2" />
<line x1="575" y1="500" x2="680" y2="514.5" stroke="#ABABAB" stroke-width="2" />
<line x1="577" y1="534.5" x2="680" y2="547.5" stroke="#7A7A7A" stroke-width="1" stroke-dasharray="5,3"/>
<line x1="575" y1="642.5" x2="676" y2="658.6" stroke="#9A9A9A" stroke-width="1.2" stroke-dasharray="6,3"/>
<circle cx="627.9" cy="466.5" r="2" fill="#fff" stroke="#555" stroke-width="0.8"/>
<circle cx="627.6" cy="492.9" r="2" fill="#fff" stroke="#555" stroke-width="0.8"/>
<circle cx="626.8" cy="526.6" r="2" fill="#fff" stroke="#555" stroke-width="0.8"/>
<circle cx="584.4" cy="546.3" r="2" fill="#fff" stroke="#555" stroke-width="0.8"/>
<polygon points="690.5,262.2 716,264 716,267.5 690.5,265.7" fill="#BDBDBD" />
<polygon points="688,336.5 713,338 713,341 688,339.5" fill="#BDBDBD" />
<line x1="699" y1="344.8" x2="711" y2="346.2" stroke="#EEEEEE" stroke-width="2" />
<polygon points="676,655.5 703,659 703,662 676,658.5" fill="#BDBDBD" />
<line x1="678" y1="655" x2="700" y2="658" stroke="#0E640E" stroke-width="1.5" />
<line x1="509" y1="631" x2="530" y2="633" stroke="#0E640E" stroke-width="1.2" />
<line x1="560" y1="637" x2="577" y2="639" stroke="#0E640E" stroke-width="1.2" />
<text x="529" y="639" font-family="Liberation Sans" font-size="14" fill="#0E640E">50</text>
<polygon points="509,634.5 577,643.5 577,660 509,660" fill="#fff" />
<polygon points="509,631.5 577,640.5 577,644.0 509,635.0" fill="#BDBDBD" />
<polygon points="577,642 600,646 600,648.5 577,644.5" fill="#BDBDBD" />
<polygon points="715.4,215 785.4,217.2 785.4,220.1 715,235.8" fill="#B0B0B0" />
<polygon points="717,235.4 785.4,220.1 762.5,669.4 701,697.5" fill="#B9B9B9" />
<polygon points="714.7,235.8 717.7,235.3 703.2,697.2 700.2,697.7" fill="#A9A9A9" />
<line x1="716" y1="235.6" x2="785.4" y2="220.1" stroke="#707070" stroke-width="1" stroke-dasharray="3,2"/>
<circle cx="719.6" cy="485.3" r="2.2" fill="#fff" stroke="#666" stroke-width="0.6"/>
<rect x="4" y="155" width="23" height="21" fill="url(#dith)"/><path d="M4.5,176 V155.5 H27" fill="none" stroke="#ACA899"/><path d="M26.5,155 V175.5 H4" fill="none" stroke="#fff"/>
<rect x="37" y="172" width="23" height="21" fill="url(#dith)"/><path d="M37.5,193 V172.5 H60" fill="none" stroke="#ACA899"/><path d="M59.5,172 V192.5 H37" fill="none" stroke="#fff"/>
<rect x="4" y="420" width="23" height="20" fill="url(#dith)"/><path d="M4.5,440 V420.5 H27" fill="none" stroke="#ACA899"/><path d="M26.5,420 V439.5 H4" fill="none" stroke="#fff"/>
<path d="M13,160 V171 L15.5,168.5 L17.5,173 L19,172 L17.2,167.8 L20.5,167.5 Z" fill="#000"/><path d="M22,158.5 L25,160.5 L22,162.5 Z" fill="#F00"/>
<circle cx="14" cy="186.5" r="5" fill="#fff" stroke="#000" stroke-width="1.6"/><path d="M11.5,185 h3 v3" fill="none" stroke="#000" stroke-width="0.8"/><path d="M17.5,190 L22.5,195" stroke="#000" stroke-width="2.2"/><path d="M21,180.5 L24,182.5 L21,184.5 Z" fill="#F00"/>
<path d="M9,212 L13,208 L17,212 L21,208" fill="none" stroke="#000080" stroke-width="1"/><rect x="8" y="211" width="2.5" height="2.5" fill="#800000"/><rect x="12" y="207" width="2.5" height="2.5" fill="#800000"/><rect x="16" y="211" width="2.5" height="2.5" fill="#800000"/><rect x="20" y="207" width="2.5" height="2.5" fill="#800000"/><path d="M21,202.5 L24,204.5 L21,206.5 Z" fill="#F00"/>
<path d="M8.5,227.5 L11.5,224.5 H22.5 V235.5 L19.5,238.5 H8.5 Z" fill="#fff" stroke="#000"/><path d="M8.5,227.5 H19.5 V238.5 M19.5,227.5 L22.5,224.5" fill="none" stroke="#000"/><path d="M20,228 L22,226 V235 L20,237.5 Z" fill="#A09D8E"/><path d="M9.5,227 L12,225 H21 L19,227 Z" fill="#C8C4B4"/><path d="M21,223 L24,225 L21,227 Z" fill="#F00"/>
<path d="M9,252 Q13,244 19,247 Q22,249 22,254" fill="none" stroke="#000080" stroke-width="1.1"/><rect x="14.5" y="251.5" width="2" height="2" fill="#800000"/><text x="10.5" y="260" font-size="7" font-family="Liberation Sans" fill="#000080" text-anchor="middle">?</text><path d="M21,246 L24,248 L21,250 Z" fill="#F00"/><path d="M21,250 L23,254 L21,254 Z" fill="#800000"/>
<circle cx="15.5" cy="275.5" r="6.8" fill="none" stroke="#000080" stroke-width="1.2"/><path d="M15.5,275.5 L21,270" stroke="#A09D8E"/><rect x="14.5" y="274.5" width="2" height="2" fill="#800000"/><path d="M21,268 L24,270 L21,272 Z" fill="#F00"/>
<path d="M9.5,296.5 L15,291.5 L21.5,294 L18.5,303.5 Z" fill="none" stroke="#000080" stroke-width="1.1"/><path d="M21,290 L24,292 L21,294 Z" fill="#F00"/>
<rect x="8" y="314" width="15" height="10" fill="#A9A697"/><path d="M8,313.5 h1 M22,313.5 h1" stroke="#A9A697"/>
<path d="M8.5,338 V348 M21.5,338 V348 M8.5,343 H21.5" stroke="#000080" stroke-width="1.2"/><path d="M8.5,343 L11,341.5 V344.5 Z M21.5,343 L19,341.5 V344.5 Z" fill="#000080"/><text x="15" y="340" font-size="6" font-family="Liberation Sans" fill="#000080" text-anchor="middle">x</text><path d="M21,334.5 L24,336.5 L21,338.5 Z" fill="#F00"/>
<text x="15" y="369.5" font-size="15" font-weight="bold" font-family="Liberation Serif" fill="#0000FF" text-anchor="middle">T</text><path d="M21,357 L24,359 L21,361 Z" fill="#F00"/>
<path d="M8,384.5 H21 M14.5,384.5 V392" stroke="#000080" stroke-width="1.2"/><path d="M14.5,377 V384" stroke="#FF00FF" stroke-width="1.2"/><path d="M21,379 L24,381 L21,383 Z" fill="#F00"/>
<path d="M7,400 L23,414" stroke="#000" stroke-width="1.3" stroke-dasharray="3,2"/>
<rect x="8" y="422.5" width="16" height="15.5" fill="#000080"/>
<text x="44" y="191" font-size="9.5" font-weight="bold" font-family="Liberation Sans" fill="#000080" text-anchor="middle">S</text><circle cx="51.2" cy="181.3" r="5.5" fill="none" stroke="#000080"/><circle cx="51.2" cy="181.3" r="3" fill="none" stroke="#000080"/><path d="M49.5,181.3 h3.4 M51.2,179.6 v3.4" stroke="#F00"/>
<path d="M41,197 V211 L44,208 L46,212 L48,211 L46.5,207.5 L50,207 Z" fill="#00FFFF" stroke="#0000FF" stroke-width="0.8"/><path d="M47,197 V211 L50,208 L52,212 L54,211 L52.5,207.5 L56,207 Z" fill="#0000FF" stroke="#000080" stroke-width="0.6"/>
<path d="M47,227 L55.5,234" stroke="#F00" stroke-width="1.6"/><path d="M47,226 L51,230" stroke="#000" stroke-width="1.6"/><path d="M44.5,219 L45.8,222.2 L49,222.4 L46.5,224.4 L47.4,227.6 L44.5,225.8 L41.6,227.6 L42.5,224.4 L40,222.4 L43.2,222.2 Z" fill="#FFFF00" stroke="#000" stroke-width="0.6"/>
<path d="M48,242 L54.5,253 H41.5 Z" fill="none" stroke="#0000FF" stroke-width="2.2" stroke-linejoin="round"/><path d="M47,243.5 L42.5,251" stroke="#FFFF00" stroke-width="1.6"/><path d="M49,243.5 L53.5,251" stroke="#F00" stroke-width="1.6"/><path d="M43,252.5 H53" stroke="#00FFFF" stroke-width="1.6"/>
<text x="44" y="275" font-size="9" font-weight="bold" font-family="Liberation Sans" fill="#000080" text-anchor="middle">P</text><path d="M47.5,267.5 H55.5 M51.5,263.5 V271.5" stroke="#F00"/><circle cx="51.5" cy="267.5" r="1.6" fill="#FFFF00"/>
<path d="M44,285 L56,297" stroke="#008080"/><text x="44" y="298" font-size="9" font-weight="bold" font-family="Liberation Sans" fill="#000080" text-anchor="middle">L</text><path d="M46.5,291.5 H54.5 M50.5,287.5 V295.5" stroke="#F00"/><circle cx="50.5" cy="291.5" r="1.6" fill="#FFFF00"/>
<text x="42" y="321" font-size="9" font-weight="bold" font-family="Liberation Sans" fill="#000080" text-anchor="middle">I</text><path d="M44.5,307.5 L56.5,319.5 M56.5,307.5 L44.5,319.5" stroke="#008080"/><path d="M46.5,313.5 H54.5 M50.5,309.5 V317.5" stroke="#F00"/><circle cx="50.5" cy="313.5" r="1.6" fill="#FFFF00"/>
<text x="45" y="343" font-size="9" font-weight="bold" font-family="Liberation Sans" fill="#000080" text-anchor="middle">I2</text><path d="M44.5,329.5 L56.5,341.5 M56.5,329.5 L44.5,341.5" stroke="#008080"/><path d="M46.5,335.5 H54.5 M50.5,331.5 V339.5" stroke="#F00"/><circle cx="50.5" cy="335.5" r="1.6" fill="#FFFF00"/>
<path d="M40,351 L56,362" stroke="#008080"/><text x="44" y="365" font-size="8.5" font-weight="bold" font-family="Liberation Sans" fill="#000080" text-anchor="middle">M</text><path d="M44.5,356.5 H52.5 M48.5,352.5 V360.5" stroke="#F00"/><circle cx="48.5" cy="356.5" r="1.6" fill="#FFFF00"/>
<path d="M40.5,377.5 H56" stroke="#800000"/><path d="M40,377.5 L42,376 V379 Z M56.5,377.5 L54.5,376 V379 Z" fill="#800000"/><text x="46.5" y="387" font-size="8.5" font-weight="bold" font-family="Liberation Sans" fill="#000080" text-anchor="middle">M2</text><path d="M44.5,377.5 H52.5 M48.5,373.5 V381.5" stroke="#F00"/><circle cx="48.5" cy="377.5" r="1.6" fill="#FFFF00"/>
<rect x="42.5" y="397.5" width="10" height="10" fill="#fff" stroke="#0000FF" stroke-width="1.2"/><path d="M43,402.5 H52 M47.5,398 V407" stroke="#F00"/><circle cx="47.5" cy="402.5" r="1.6" fill="#FFFF00"/>
<path d="M40,417 L56,431" stroke="#008080"/><rect x="42.5" y="419.5" width="10" height="10" fill="#fff" stroke="#0000FF" stroke-width="1.2"/><path d="M43,424.5 H52 M47.5,420 V429" stroke="#F00"/><circle cx="47.5" cy="424.5" r="1.6" fill="#FFFF00"/>
<rect x="45.5" y="438.5" width="10" height="10" fill="#fff" stroke="#0000FF" stroke-width="1.2"/><path d="M46,443.5 H55 M50.5,439 V448" stroke="#F00"/><circle cx="50.5" cy="443.5" r="1.6" fill="#FFFF00"/><text x="45" y="454" font-size="9" font-weight="bold" font-family="Liberation Sans" fill="#000080" text-anchor="middle">CG</text>
<path d="M41,474 Q48,462 55,474" fill="none" stroke="#0000FF" stroke-width="1.2"/><path d="M44,461 L52,468" stroke="#000"/><path d="M47.5,468.5 H55.5 M51.5,464.5 V472.5" stroke="#F00"/><circle cx="51.5" cy="468.5" r="1.6" fill="#FFFF00"/>
<g transform="translate(73,165)"><rect x="0" y="0" width="16" height="15" fill="#fff"/><rect x="5" y="1" width="7" height="13" fill="#000"/><path d="M7.5,13 V8 L8.5,6 V4 M9.5,4 V6 L10.5,8 V13 Z" fill="#fff"/><rect x="7.5" y="8" width="3" height="5" fill="#fff"/><rect x="8.5" y="5" width="1" height="3" fill="#fff"/></g>
<g transform="translate(73,186)"><rect x="0" y="0" width="16" height="15" fill="#fff"/><rect x="4" y="1" width="9" height="3" fill="#000"/><rect x="5" y="2" width="7" height="1" fill="#fff"/><rect x="5" y="4" width="7" height="2" fill="#000"/><path d="M5.5,6 V12 L8.5,14 L11.5,12 V6" fill="#fff" stroke="#000" stroke-width="1.2"/></g>
<g transform="translate(73,207)"><rect x="0" y="0" width="16" height="15" fill="#fff"/><rect x="3" y="1" width="11" height="4" fill="#000"/><rect x="5" y="5" width="7" height="2" fill="#000"/><path d="M4.5,7 V12 L8.5,14.5 L12.5,12 V7 Z" fill="#fff" stroke="#000" stroke-width="1.5"/></g>
<g transform="translate(73,228)"><rect x="0" y="0" width="16" height="15" fill="#fff"/><path d="M1.5,14 Q2,4 11.5,1.5 V14" fill="none" stroke="#000" stroke-width="1.1"/></g>
<g transform="translate(73,249)"><rect x="0" y="0" width="16" height="15" fill="#fff"/><path d="M1.5,13 V3 Q5,0 7,4 Q9,0 13,3 V13" fill="none" stroke="#000" stroke-width="1.1"/></g>
<g transform="translate(73,270)"><rect x="0" y="0" width="16" height="15" fill="#fff"/><path d="M1.5,14 V1.5 H6 Q12,3 13,14" fill="none" stroke="#000" stroke-width="1.1"/></g>
<g transform="translate(73,291)"><rect x="0" y="0" width="16" height="15" fill="#fff"/><rect x="5" y="1" width="7" height="13" fill="#000"/><rect x="7" y="3" width="1" height="1" fill="#fff"/><rect x="7" y="5" width="1" height="1" fill="#fff"/><rect x="7" y="7" width="1" height="1" fill="#fff"/><rect x="7" y="9" width="1" height="1" fill="#fff"/><rect x="7" y="11" width="1" height="1" fill="#fff"/><rect x="9" y="3" width="1" height="1" fill="#fff"/><rect x="9" y="5" width="1" height="1" fill="#fff"/><rect x="9" y="7" width="1" height="1" fill="#fff"/><rect x="9" y="9" width="1" height="1" fill="#fff"/><rect x="9" y="11" width="1" height="1" fill="#fff"/></g>
<g transform="translate(73,312)"><rect x="0" y="0" width="16" height="15" fill="#fff"/><rect x="1" y="4" width="15" height="7" fill="#000"/><path d="M2,7.5 H5 L6,6 L7,9 L8,6 L9,9 L10,6 L11,7.5 H15" stroke="#fff" fill="none"/></g>
<g transform="translate(73,333)"><rect x="0" y="0" width="16" height="15" fill="#fff"/><circle cx="8.5" cy="7.5" r="6.5" fill="none" stroke="#000"/><path d="M4,3 L13,12 M13,3 L4,12" stroke="#000"/></g>
<g transform="translate(73,354)"><rect x="0" y="0" width="16" height="15" fill="#fff"/><rect x="1" y="5" width="15" height="5" fill="#000"/></g>
<g transform="translate(73,375)"><rect x="0" y="0" width="16" height="15" fill="#fff"/><rect x="1.5" y="5.5" width="14" height="4" fill="#fff" stroke="#000" stroke-width="1.2"/><rect x="2" y="8" width="13" height="1.5" fill="#000"/></g>
<g transform="translate(73,396)"><rect x="0" y="0" width="16" height="15" fill="#fff"/><rect x="1" y="3" width="15" height="10" fill="#000"/><rect x="3" y="7" width="4" height="5" fill="#fff"/><rect x="2" y="4" width="13" height="1" fill="#fff"/></g>
<g transform="translate(73,417)"><rect x="0" y="0" width="16" height="15" fill="#fff"/><rect x="1" y="0" width="15" height="15" fill="#000"/><path d="M3,2 H12 L14,4 V13 H3 Z" fill="#fff"/></g>
<g transform="translate(73,438)"><rect x="0" y="0" width="16" height="15" fill="#fff"/><path d="M12,1 L8,9" stroke="#000"/><ellipse cx="6.5" cy="11" rx="3" ry="2" fill="#fff" stroke="#000"/></g>
<g transform="translate(73,459)"><rect x="0" y="0" width="16" height="15" fill="#fff"/><path d="M12,1 L7,11" stroke="#000"/><rect x="4.5" y="10.5" width="4" height="3.5" fill="#fff" stroke="#000"/><path d="M10,11 h3 M10,13 h3" stroke="#000"/></g>
<g transform="translate(73,480)"><rect x="0" y="0" width="16" height="15" fill="#fff"/><path d="M3,1 L8.5,9 L14,1" fill="none" stroke="#000"/><rect x="6.5" y="9.5" width="4" height="4" fill="#fff" stroke="#000"/></g>
<g transform="translate(73,501)"><rect x="0" y="0" width="16" height="15" fill="#fff"/><rect x="2" y="1" width="13" height="13" fill="#000"/></g>
<g transform="translate(73,522)"><rect x="0" y="0" width="16" height="15" fill="#fff"/><rect x="1" y="4" width="15" height="6" fill="#000"/><rect x="3" y="6" width="3" height="2" fill="#fff"/><rect x="7" y="6" width="3" height="2" fill="#fff"/><rect x="11" y="6" width="3" height="2" fill="#fff"/></g>
<rect x="7.75" y="93.75" width="12.5" height="8.5" fill="none" stroke="#000" stroke-width="1.5"/><path d="M18.5,93 V88.5 Q18.5,86.5 20.5,86.5 H24.5 Q26.5,86.5 26.5,88.5 V92.5" fill="none" stroke="#000" stroke-width="3.2"/><path d="M18.5,93 V88.5 Q18.5,86.5 20.5,86.5 H24.5 Q26.5,86.5 26.5,88.5 V92.5" fill="none" stroke="#ECE9D8" stroke-width="0.9"/><circle cx="13.8" cy="96.6" r="1.6" fill="#000"/><rect x="12.9" y="96.8" width="1.9" height="3.8" fill="#000"/>
<rect x="111.75" y="93.75" width="12.5" height="8.5" fill="none" stroke="#000" stroke-width="1.5"/><path d="M122.5,93 V88.5 Q122.5,86.5 124.5,86.5 H128.5 Q130.5,86.5 130.5,88.5 V92.5" fill="none" stroke="#000" stroke-width="3.2"/><path d="M122.5,93 V88.5 Q122.5,86.5 124.5,86.5 H128.5 Q130.5,86.5 130.5,88.5 V92.5" fill="none" stroke="#ECE9D8" stroke-width="0.9"/><circle cx="117.8" cy="96.6" r="1.6" fill="#000"/><rect x="116.9" y="96.8" width="1.9" height="3.8" fill="#000"/>
<rect x="215.75" y="93.75" width="12.5" height="8.5" fill="none" stroke="#000" stroke-width="1.5"/><path d="M226.5,93 V88.5 Q226.5,86.5 228.5,86.5 H232.5 Q234.5,86.5 234.5,88.5 V92.5" fill="none" stroke="#000" stroke-width="3.2"/><path d="M226.5,93 V88.5 Q226.5,86.5 228.5,86.5 H232.5 Q234.5,86.5 234.5,88.5 V92.5" fill="none" stroke="#ECE9D8" stroke-width="0.9"/><circle cx="221.8" cy="96.6" r="1.6" fill="#000"/><rect x="220.9" y="96.8" width="1.9" height="3.8" fill="#000"/>
<g transform="translate(417,120.8) scale(1.0)"><path d="M0,2 H3 L4,0 H8 L9,2 H11 V7 H9 L8,8.5 H4 L3,7 H0 Z" fill="#000"/><circle cx="6" cy="5" r="1.8" fill="#C8C4B4"/><rect x="2" y="3" width="1" height="3" fill="#fff"/><rect x="9" y="3" width="1" height="3" fill="#fff"/><path d="M4,2.5 h1 M7,2.5 h1" stroke="#fff" stroke-width="0.8"/></g>
<path d="M417,131.5 H429" stroke="#A09D8E" stroke-width="1.2"/><path d="M418.5,129 L415.5,131.5 L418.5,134" fill="none" stroke="#000" stroke-width="1.4"/>
<g transform="translate(439,120.8) scale(1.0)"><path d="M0,2 H3 L4,0 H8 L9,2 H11 V7 H9 L8,8.5 H4 L3,7 H0 Z" fill="#000"/><circle cx="6" cy="5" r="1.8" fill="#C8C4B4"/><rect x="2" y="3" width="1" height="3" fill="#fff"/><rect x="9" y="3" width="1" height="3" fill="#fff"/><path d="M4,2.5 h1 M7,2.5 h1" stroke="#fff" stroke-width="0.8"/></g>
<path d="M438,131.5 H450" stroke="#A09D8E" stroke-width="1.2"/><path d="M449,129 L452,131.5 L449,134" fill="none" stroke="#000" stroke-width="1.4"/>
<g transform="translate(510.8,122.8) scale(1.0)"><path d="M0,2 H3 L4,0 H8 L9,2 H11 V7 H9 L8,8.5 H4 L3,7 H0 Z" fill="#000"/><circle cx="6" cy="5" r="1.8" fill="#C8C4B4"/><rect x="2" y="3" width="1" height="3" fill="#fff"/><rect x="9" y="3" width="1" height="3" fill="#fff"/><path d="M4,2.5 h1 M7,2.5 h1" stroke="#fff" stroke-width="0.8"/></g>
<path d="M524.3,121 V133" stroke="#A09D8E" stroke-width="1.2"/><path d="M522,122.5 L524.3,119.8 L526.6,122.5" fill="none" stroke="#000" stroke-width="1.4"/>
<g transform="translate(534,122.8) scale(1.0)"><path d="M0,2 H3 L4,0 H8 L9,2 H11 V7 H9 L8,8.5 H4 L3,7 H0 Z" fill="#000"/><circle cx="6" cy="5" r="1.8" fill="#C8C4B4"/><rect x="2" y="3" width="1" height="3" fill="#fff"/><rect x="9" y="3" width="1" height="3" fill="#fff"/><path d="M4,2.5 h1 M7,2.5 h1" stroke="#fff" stroke-width="0.8"/></g>
<path d="M547.5,120 V132" stroke="#A09D8E" stroke-width="1.2"/><path d="M545.2,130.5 L547.5,133.2 L549.8,130.5" fill="none" stroke="#000" stroke-width="1.4"/>
<circle cx="614" cy="126.5" r="7.3" fill="none" stroke="#A09D8E" stroke-width="1.1"/><g transform="translate(608.2,121.8) scale(1.0)"><path d="M0,2 H3 L4,0 H8 L9,2 H11 V7 H9 L8,8.5 H4 L3,7 H0 Z" fill="#000"/><circle cx="6" cy="5" r="1.8" fill="#C8C4B4"/><rect x="2" y="3" width="1" height="3" fill="#fff"/><rect x="9" y="3" width="1" height="3" fill="#fff"/><path d="M4,2.5 h1 M7,2.5 h1" stroke="#fff" stroke-width="0.8"/></g><path d="M607,133.5 L607,130 L610.5,130 Z" fill="#000"/>
<circle cx="637" cy="126.5" r="7.3" fill="none" stroke="#A09D8E" stroke-width="1.1"/><g transform="translate(632,121.8) scale(1.0)"><path d="M0,2 H3 L4,0 H8 L9,2 H11 V7 H9 L8,8.5 H4 L3,7 H0 Z" fill="#000"/><circle cx="6" cy="5" r="1.8" fill="#C8C4B4"/><rect x="2" y="3" width="1" height="3" fill="#fff"/><rect x="9" y="3" width="1" height="3" fill="#fff"/><path d="M4,2.5 h1 M7,2.5 h1" stroke="#fff" stroke-width="0.8"/></g><path d="M644,133.5 L644,130 L640.5,130 Z" fill="#000"/>
<path d="M755.5,119.5 H762.5 V128" fill="none" stroke="#A09D8E" stroke-width="1.2"/><path d="M753.5,121 H760 V129" fill="none" stroke="#000" stroke-width="1.2"/><path d="M753.5,122 H758 V127 H762 L755.8,134 L750.5,127 H753.5 Z" fill="#000"/>
<path d="M781.5,133.5 H774.5 V125" fill="none" stroke="#A09D8E" stroke-width="1.2"/><path d="M783.5,132 H777 V124" fill="none" stroke="#000" stroke-width="1.2"/><path d="M783.5,131 H779 V126 H775 L781,119 L787,126 H783.5 Z" fill="#000"/>
<g transform="translate(796,119.4) scale(1.0)"><path d="M0,2 H3 L4,0 H8 L9,2 H11 V7 H9 L8,8.5 H4 L3,7 H0 Z" fill="#000"/><circle cx="6" cy="5" r="1.8" fill="#C8C4B4"/><rect x="2" y="3" width="1" height="3" fill="#fff"/><rect x="9" y="3" width="1" height="3" fill="#fff"/><path d="M4,2.5 h1 M7,2.5 h1" stroke="#fff" stroke-width="0.8"/></g><path d="M803,126.5 L808,131" stroke="#A09D8E"/><path d="M807.5,130.5 L811,134 M811,130.5 L807.5,134" stroke="#F00" stroke-width="1.1"/>
<g transform="translate(818.5,119)"><rect x="5" y="5" width="7" height="5" fill="#fff" stroke="#000" stroke-width="1.2"/><path d="M8.5,0 L6.8,2 H10.2 Z M8.5,15 L6.8,13 H10.2 Z M0,7.5 L2,5.8 V9.2 Z M17,7.5 L15,5.8 V9.2 Z" fill="#000"/><path d="M8.5,2 V5 M8.5,10 V13 M2,7.5 H5 M12,7.5 H15" stroke="#000" stroke-width="0.8" stroke-dasharray="1,1"/></g>
<g transform="translate(841.5,119)"><rect x="5" y="5" width="7" height="5" fill="#F00" stroke="#000" stroke-width="1.2"/><path d="M8.5,0 L6.8,2 H10.2 Z M8.5,15 L6.8,13 H10.2 Z M0,7.5 L2,5.8 V9.2 Z M17,7.5 L15,5.8 V9.2 Z" fill="#000"/><path d="M8.5,2 V5 M8.5,10 V13 M2,7.5 H5 M12,7.5 H15" stroke="#000" stroke-width="0.8" stroke-dasharray="1,1"/></g><circle cx="850" cy="126.5" r="1.5" fill="#FF0"/>
<rect x="789" y="87" width="16" height="15" fill="#C0C0C0"/><rect x="794" y="87.5" width="7" height="14" fill="#000"/><path d="M797.5,88 V101" stroke="#008000" stroke-dasharray="1,1"/><rect x="796" y="89.5" width="3" height="2" fill="#FFEE55"/><rect x="796" y="93.5" width="3" height="2" fill="#FFEE55"/><rect x="795" y="99" width="6" height="2" fill="#FFEE55"/>
<rect x="812" y="87" width="16" height="15" fill="#C0C0C0"/><rect x="818" y="88" width="4" height="13" fill="#000"/><rect x="820" y="88" width="1" height="12" fill="#F00"/><rect x="815.5" y="90" width="3" height="2" fill="#000"/><rect x="815.5" y="93.5" width="3" height="2" fill="#000"/><rect x="815.5" y="97" width="3" height="2" fill="#000"/>
<text x="1008" y="353" font-family="Liberation Serif" font-size="15" fill="#000" text-anchor="middle">A</text>
<path d="M1000.5,373.8 L1002,372.8 H1009 L1010,372.3 H1015.8 V377 L1009.5,380.8 L1008.5,380 L1010.5,377.8 H1006.5 V380.3 H1005 L1004,377.8 V375.8 H1001.5 Z" fill="#fff" stroke="#000" stroke-width="1.3" stroke-linejoin="round"/><path d="M1007,376 L1008,376.5" stroke="#555"/>
<path d="M1001.5,401 Q1000,396 1005,396 Q1010,396 1012,399 L1014,404 Q1015,410 1009,410.5 Q1003,411 1001.5,405 Z" fill="#FFFF00" stroke="#000" stroke-width="1.4"/><circle cx="1004" cy="401.5" r="1.5" fill="#008000"/><circle cx="1005" cy="404" r="1.3" fill="#00E0E0"/><circle cx="1011" cy="406" r="1.6" fill="#F00"/><path d="M1008,398 L1006.5,400" stroke="#F00" stroke-width="1.4"/><path d="M1004.5,409 L1012.5,400.5" stroke="#800000" stroke-width="2"/><path d="M1013,400 L1014.5,396 L1015.5,397.5 Z" fill="#fff" stroke="#000" stroke-width="0.9"/><path d="M1002,411 L1004,408.5" stroke="#800000" stroke-width="1.2"/>
<rect x="976.5" y="532.5" width="12" height="10" fill="#fff" stroke="#000" stroke-width="1.3"/><path d="M978,534 L987.5,541.5 M987.5,534 L978,541.5" stroke="#F00"/>
<path d="M977,553.5 H989 M977,557 H989 M977,560.5 H989 M979.5,550 V564 M983,550 V564 M986.5,550 V564" stroke="#000" stroke-width="1.3"/>
<path d="M983,569.5 V582 M977,575.5 H989" stroke="#A9A697" stroke-width="4"/>
<circle cx="982" cy="594" r="4.8" fill="#fff" stroke="#000" stroke-width="1.5"/><path d="M985.5,597.5 L989,601" stroke="#000" stroke-width="2"/><path d="M980,591.5 h3 v3 h-3 Z" fill="#fff" stroke="#000"/><path d="M979.5,592 V596 H983" fill="none" stroke="#000"/>
<circle cx="982" cy="613" r="4.8" fill="#fff" stroke="#000" stroke-width="1.5"/><path d="M985.5,616.5 L989,620" stroke="#000" stroke-width="2"/><rect x="980" y="611" width="4" height="4" fill="none" stroke="#000"/>
<circle cx="982" cy="632" r="4.8" fill="#fff" stroke="#000" stroke-width="1.5"/><path d="M985.5,635.5 L989,639" stroke="#000" stroke-width="2"/><path d="M979.5,632 H984.5 M982,629.5 V634.5" stroke="#000" stroke-width="1.2"/>
<circle cx="982" cy="651" r="4.8" fill="#fff" stroke="#000" stroke-width="1.5"/><path d="M985.5,654.5 L989,658" stroke="#000" stroke-width="2"/><path d="M979.5,651 H984.5" stroke="#000" stroke-width="1.2"/>
<circle cx="982" cy="670" r="4.8" fill="#fff" stroke="#000" stroke-width="1.5"/><path d="M985.5,673.5 L989,677" stroke="#000" stroke-width="2"/><path d="M983.5,668 Q980,667 980,670.5 Q980.5,673 983,672.5" fill="none" stroke="#0000C0" stroke-width="1.2"/><path d="M979,667 L982,665.5 L982.5,669 Z" fill="#0000C0"/>
<circle cx="982" cy="689" r="4.8" fill="#ECE9D8" stroke="#B9B6A8" stroke-width="1.5"/><path d="M985.5,692.5 L989,696" stroke="#B9B6A8" stroke-width="2"/><path d="M980.5,687 Q984,686 984,689.5 Q983.5,692 981,691.5" fill="none" stroke="#C8C4B4" stroke-width="1.2"/>
<path d="M109.5,713 V704 M107,707 L109.5,704 L112,707" fill="none" stroke="#8C8A7C" stroke-width="1.1"/>
<path d="M124,709.5 H134 M131,707 L134,709.5 L131,712" fill="none" stroke="#8C8A7C" stroke-width="1.1"/>
<path d="M141,713 L153,707.5 M150,706 L153.5,707.5 L151.5,710" fill="none" stroke="#8C8A7C" stroke-width="1.1"/>
<path d="M162,714 L173,704.5 M169.5,704.5 L173.5,704 L173,708" fill="none" stroke="#8C8A7C" stroke-width="1.1"/>
<path d="M185,714 L189.5,704 M187,705.5 L189.5,704 L191,707" fill="none" stroke="#8C8A7C" stroke-width="1.1"/>
<path d="M211,714 L206.5,704 M205,707 L206.5,704 L209,705.5" fill="none" stroke="#8C8A7C" stroke-width="1.1"/>
<path d="M237,714 L226,704.5 M226,708 L225.5,704 L229.5,704.5" fill="none" stroke="#8C8A7C" stroke-width="1.1"/>
<path d="M258,713.5 L244,707.5 M246.5,706 L243.5,707.5 L245.5,710" fill="none" stroke="#8C8A7C" stroke-width="1.1"/>
</svg>
</body></html>
